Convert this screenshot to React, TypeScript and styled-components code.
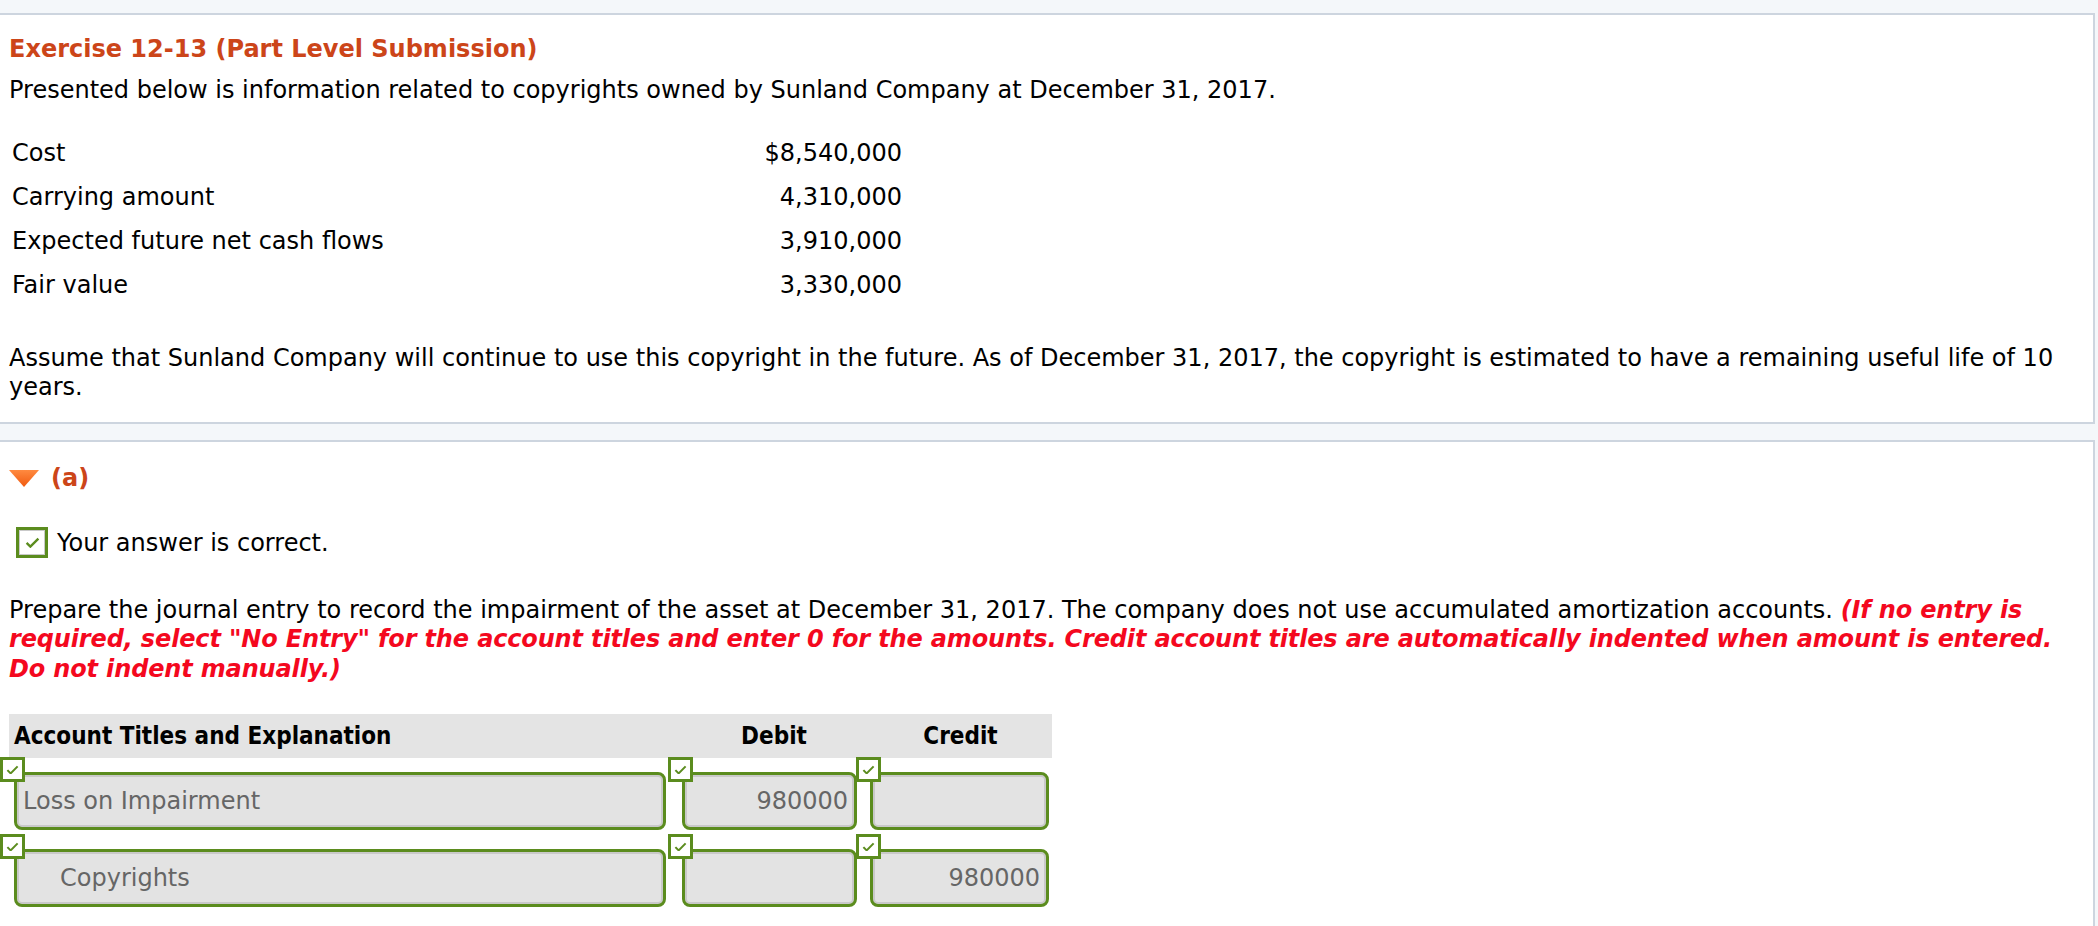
import React from 'react';
import styled, { createGlobalStyle } from 'styled-components';

const GlobalStyle = createGlobalStyle`
  html, body {
    margin: 0;
    padding: 0;
    background: #f4f7fa;
  }
  body {
    font-family: "DejaVu Sans", Verdana, "Liberation Sans", sans-serif;
    font-size: 24px;
    color: #000;
  }
`;

const Page = styled.div`
  padding-top: 13px;
  height: 926px;
  box-sizing: border-box;
  overflow: hidden;
  display: flex;
  flex-direction: column;
`;

const Panel = styled.section<{ $grow?: boolean }>`
  background: #fff;
  border: 2px solid #cdd5df;
  border-left: none;
  margin-right: 3px;
  padding: 20px 10px 19px 9px;
  flex: ${(p) => (p.$grow ? '1' : 'none')};
`;

const SecondPanel = styled(Panel)`
  margin-top: 16px;
  padding-top: 22px;
  border-bottom: none;
`;

const Title = styled.h1`
  margin: 0;
  font-size: 24px;
  line-height: 29px;
  font-weight: bold;
  color: #cc4519;
`;

const Text = styled.p<{ $top?: number }>`
  margin: ${(p) => p.$top ?? 0}px 0 0;
  line-height: 29.5px;
`;

const Figures = styled.div`
  margin-top: 25px;
  display: grid;
  grid-template-columns: 600px 293px;
`;

const FigLabel = styled.div`
  height: 44px;
  line-height: 44px;
  padding-left: 3px;
`;

const FigValue = styled.div`
  height: 44px;
  line-height: 44px;
  text-align: right;
`;

const PartHeading = styled.div`
  display: flex;
  align-items: center;
  height: 29px;
  gap: 12px;
  font-weight: bold;
  color: #cc4519;
`;

const Triangle = styled.svg`
  margin-top: 1px;
`;

const Correct = styled.div`
  margin-top: 34px;
  display: flex;
  align-items: center;
  gap: 9px;
  padding-left: 7px;
  height: 32px;
`;

const BigBox = styled.span`
  width: 32px;
  height: 31px;
  box-sizing: border-box;
  border: 3px solid #5b8c1e;
  background: #fff;
  box-shadow: inset 0 0 0 1px #c9c9c9;
  display: flex;
  align-items: center;
  justify-content: center;
`;

const Note = styled.span`
  color: #f4081e;
  font-weight: bold;
  font-style: italic;
  letter-spacing: -0.15px;
`;

const HeadRow = styled.div`
  margin-top: 30px;
  width: 1043px;
  height: 44px;
  background: #e4e4e4;
  display: grid;
  grid-template-columns: 670px 190px 183px;
  align-items: center;
  font-family: "DejaVu Sans Condensed", "DejaVu Sans", Tahoma, sans-serif;
  font-weight: bold;
`;

const HeadCell = styled.div<{ $center?: boolean }>`
  padding-left: ${(p) => (p.$center ? 0 : 5)}px;
  text-align: ${(p) => (p.$center ? 'center' : 'left')};
`;

const EntryRow = styled.div<{ $top: number }>`
  margin-top: ${(p) => p.$top}px;
  padding-left: 5px;
  display: grid;
  grid-template-columns: 652px 175px 176px;
  column-gap: 16px;
  & > :nth-child(3) {
    margin-left: -3px;
  }
`;

const Cell = styled.div`
  position: relative;
`;

const Badge = styled.span`
  position: absolute;
  left: -14px;
  top: -15px;
  z-index: 2;
  width: 25px;
  height: 25px;
  box-sizing: border-box;
  border: 3px solid #5b8c1e;
  background: #fff;
  display: flex;
  align-items: center;
  justify-content: center;
`;

const Field = styled.input<{ $indent?: boolean; $right?: boolean }>`
  display: block;
  width: 100%;
  height: 58px;
  box-sizing: border-box;
  margin: 0;
  border: 3px solid #5b8c1e;
  border-radius: 8px;
  box-shadow: inset 0 0 0 2px #c9c9c9;
  background: #e3e3e3;
  font-family: "DejaVu Sans", Verdana, sans-serif;
  font-size: 24px;
  color: #666;
  padding: 0 6px 0 ${(p) => (p.$indent ? 43 : 6)}px;
  text-align: ${(p) => (p.$right ? 'right' : 'left')};
  outline: none;
`;

const Tick = ({ size = 14 }: { size?: number }) => (
  <svg width={size} height={size * 0.75} viewBox="0 0 14 10.5">
    <polyline points="1.5,5.5 5,9 12.5,1.5" fill="none" stroke="#5b8c1e" strokeWidth="2.2" />
  </svg>
);

const figures = [
  ['Cost', '$8,540,000'],
  ['Carrying amount', '4,310,000'],
  ['Expected future net cash flows', '3,910,000'],
  ['Fair value', '3,330,000'],
];

const entries = [
  { account: 'Loss on Impairment', debit: '980000', credit: '', indent: false },
  { account: 'Copyrights', debit: '', credit: '980000', indent: true },
];

export default function App() {
  return (
    <>
      <GlobalStyle />
      <Page>
        <Panel>
          <Title>Exercise 12-13 (Part Level Submission)</Title>
          <Text $top={12}>
            Presented below is information related to copyrights owned by Sunland Company at December 31, 2017.
          </Text>
          <Figures>
            {figures.map(([label, value]) => (
              <React.Fragment key={label}>
                <FigLabel>{label}</FigLabel>
                <FigValue>{value}</FigValue>
              </React.Fragment>
            ))}
          </Figures>
          <Text $top={37}>
            Assume that Sunland Company will continue to use this copyright in the future. As of December 31, 2017,
            the copyright is estimated to have a remaining useful life of 10 years.
          </Text>
        </Panel>

        <SecondPanel $grow>
          <PartHeading>
            <Triangle width="30" height="17" viewBox="0 0 30 17">
              <defs>
                <linearGradient id="tri" x1="0" y1="0" x2="0" y2="1">
                  <stop offset="0" stopColor="#ff8a40" />
                  <stop offset="1" stopColor="#f05a10" />
                </linearGradient>
              </defs>
              <polygon points="0,0 30,0 15,17" fill="url(#tri)" />
            </Triangle>
            (a)
          </PartHeading>

          <Correct>
            <BigBox>
              <Tick size={15} />
            </BigBox>
            Your answer is correct.
          </Correct>

          <Text $top={37}>
            Prepare the journal entry to record the impairment of the asset at December 31, 2017. The company does not
            use accumulated amortization accounts.{' '}
            <Note>
              (If no entry is required, select "No Entry" for the account titles and enter 0 for the amounts. Credit
              account titles are automatically indented when amount is entered. Do not indent manually.)
            </Note>
          </Text>

          <HeadRow>
            <HeadCell>Account Titles and Explanation</HeadCell>
            <HeadCell $center>Debit</HeadCell>
            <HeadCell $center>Credit</HeadCell>
          </HeadRow>

          {entries.map((e, i) => (
            <EntryRow key={e.account} $top={i === 0 ? 14 : 19}>
              <Cell>
                <Badge>
                  <Tick size={13} />
                </Badge>
                <Field readOnly value={e.account} $indent={e.indent} />
              </Cell>
              <Cell>
                <Badge>
                  <Tick size={13} />
                </Badge>
                <Field readOnly value={e.debit} $right />
              </Cell>
              <Cell>
                <Badge>
                  <Tick size={13} />
                </Badge>
                <Field readOnly value={e.credit} $right />
              </Cell>
            </EntryRow>
          ))}
        </SecondPanel>
      </Page>
    </>
  );
}
